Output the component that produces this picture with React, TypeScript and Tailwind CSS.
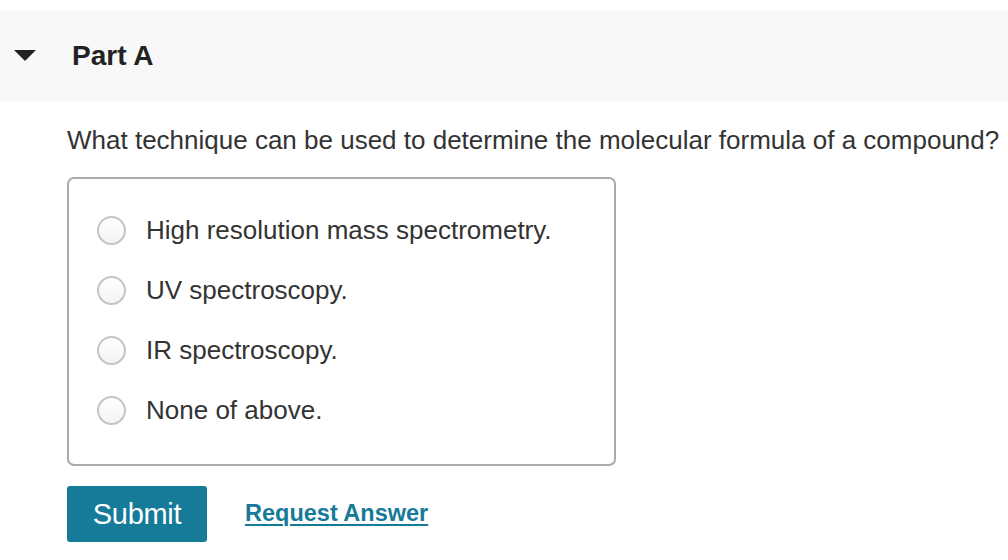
import React, { useState } from 'react';

const options = [
    'High resolution mass spectrometry.',
    'UV spectroscopy.',
    'IR spectroscopy.',
    'None of above.',
];

const App: React.FC = () => {
    const [selected, setSelected] = useState<number | null>(null);

    return (
        <div className="w-[1008px] h-[560px] bg-white overflow-hidden text-[#333] font-['Liberation_Sans',Arial,sans-serif]">
            <div className="h-[10px]" />
            <div className="h-[91px] bg-[#f8f8f8] flex items-center">
                <svg className="ml-[14px] w-[22px] h-[12px]" viewBox="0 0 22 12">
                    <polygon points="0,0 22,0 11,11" fill="#222" />
                </svg>
                <h2 className="ml-[36px] text-[28px] font-bold text-[#222] leading-none">Part A</h2>
            </div>
            <div className="pl-[67px]">
                <p className="mt-[24px] text-[26px] leading-[30px] whitespace-nowrap">
                    What technique can be used to determine the molecular formula of a compound?
                </p>
                <div className="mt-[22px] w-[549px] h-[289px] border-2 border-[#aaa] rounded-[7px] pt-[21px] pl-[28px]">
                    {options.map((option, index) => (
                        <label key={index} className="flex items-center h-[60px] cursor-pointer" onClick={() => setSelected(index)}>
                            <span className="w-[29px] h-[29px] rounded-full border-2 border-[#c4c4c4] bg-gradient-to-b from-white to-[#f4f4f4] flex items-center justify-center">
                                {selected === index && <span className="w-[13px] h-[13px] rounded-full bg-[#17799b]" />}
                            </span>
                            <span className="ml-[20px] text-[26px] leading-none">{option}</span>
                        </label>
                    ))}
                </div>
                <div className="mt-[20px] flex items-center">
                    <button className="w-[140px] h-[56px] bg-[#167a99] rounded-[3px] text-white text-[29px] leading-none tracking-[-0.3px]">
                        Submit
                    </button>
                    <a href="#" className="ml-[38px] text-[23.5px] font-bold text-[#167a99] underline underline-offset-[3px] decoration-2">
                        Request Answer
                    </a>
                </div>
            </div>
        </div>
    );
};

export default App;
